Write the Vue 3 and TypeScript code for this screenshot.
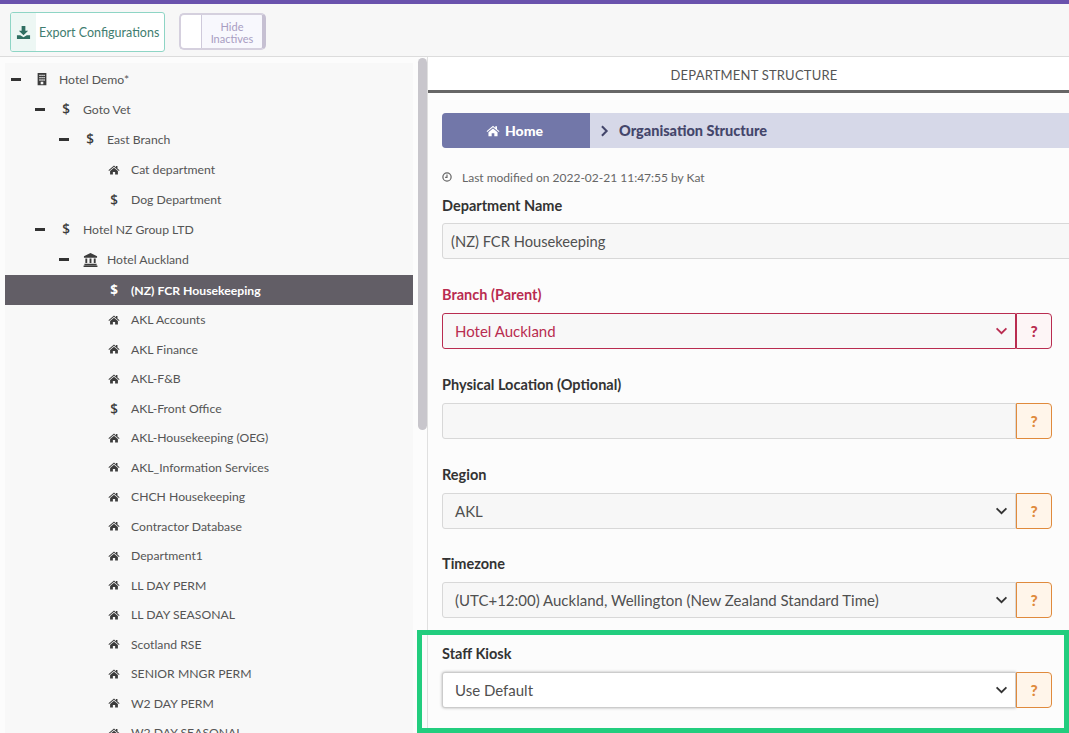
<script setup lang="ts">
type Row = { label: string; indent: number; icon: 'building' | 'dollar' | 'home' | 'bank'; open?: boolean; selected?: boolean }
const rows: Row[] = [
  { label: 'Hotel Demo*', indent: 0, icon: 'building', open: true },
  { label: 'Goto Vet', indent: 1, icon: 'dollar', open: true },
  { label: 'East Branch', indent: 2, icon: 'dollar', open: true },
  { label: 'Cat department', indent: 3, icon: 'home' },
  { label: 'Dog Department', indent: 3, icon: 'dollar' },
  { label: 'Hotel NZ Group LTD', indent: 1, icon: 'dollar', open: true },
  { label: 'Hotel Auckland', indent: 2, icon: 'bank', open: true },
  { label: '(NZ) FCR Housekeeping', indent: 3, icon: 'dollar', selected: true },
  { label: 'AKL Accounts', indent: 3, icon: 'home' },
  { label: 'AKL Finance', indent: 3, icon: 'home' },
  { label: 'AKL-F&B', indent: 3, icon: 'home' },
  { label: 'AKL-Front Office', indent: 3, icon: 'dollar' },
  { label: 'AKL-Housekeeping (OEG)', indent: 3, icon: 'home' },
  { label: 'AKL_Information Services', indent: 3, icon: 'home' },
  { label: 'CHCH Housekeeping', indent: 3, icon: 'home' },
  { label: 'Contractor Database', indent: 3, icon: 'home' },
  { label: 'Department1', indent: 3, icon: 'home' },
  { label: 'LL DAY PERM', indent: 3, icon: 'home' },
  { label: 'LL DAY SEASONAL', indent: 3, icon: 'home' },
  { label: 'Scotland RSE', indent: 3, icon: 'home' },
  { label: 'SENIOR MNGR PERM', indent: 3, icon: 'home' },
  { label: 'W2 DAY PERM', indent: 3, icon: 'home' },
  { label: 'W2 DAY SEASONAL', indent: 3, icon: 'home' },
]
type Field = { label: string; value: string; tone?: 'danger' | 'active'; chevron: boolean }
const fields: Field[] = [
  { label: 'Branch (Parent)', value: 'Hotel Auckland', tone: 'danger', chevron: true },
  { label: 'Physical Location (Optional)', value: '', chevron: false },
  { label: 'Region', value: 'AKL', chevron: true },
  { label: 'Timezone', value: '(UTC+12:00) Auckland, Wellington (New Zealand Standard Time)', chevron: true },
  { label: 'Staff Kiosk', value: 'Use Default', tone: 'active', chevron: true },
]
</script>

<template>
  <div class="page">
    <div class="topline"></div>
    <header class="toolbar">
      <button class="export">
        <span class="export-icon">
          <svg viewBox="0 0 16 16" width="15" height="15"><path fill="currentColor" d="M6 1h4v5h3L8 11 3 6h3zM1 11h3.500L8 13l3.500-2H15v4H1z" /></svg>
        </span>
        <span class="export-text">Export Configurations</span>
      </button>
      <div class="toggle">
        <span class="toggle-knob"></span>
        <span class="toggle-label">Hide<br />Inactives</span>
      </div>
    </header>
    <div class="main">
      <aside class="side">
        <div class="tree">
          <div v-for="r in rows" :key="r.label" class="row" :class="['lvl' + r.indent, { selected: r.selected, open: r.open }]">
            <span class="dash"><i v-if="r.open"></i></span>
            <span class="node-icon">
              <span v-if="r.icon === 'dollar'" class="dollar">$</span>
              <svg v-else-if="r.icon === 'home'" viewBox="0 0 16 16" width="12" height="12"><path fill="currentColor" d="M8 2 0.6 8.200l.8 1L8 3.800l6.600 5.400.8-1L12.600 5.900V2.500h-2v1.700zM8 5 2.800 9.300V14h3.700v-3.500h3V14h3.700V9.300z" /></svg>
              <svg v-else-if="r.icon === 'building'" viewBox="0 0 16 16" width="14" height="14"><path fill="currentColor" fill-rule="evenodd" d="M3 1h10v14H3zM5 3v1.500h1.500V3zM7.300 3v1.500h1.500V3zM9.600 3v1.500h1.500V3zM5 5.700v1.500h1.500V5.700zM7.300 5.700v1.500h1.500V5.700zM9.600 5.700v1.500h1.500V5.700zM5 8.400v1.500h1.500V8.400zM7.300 8.400v1.500h1.500V8.400zM9.600 8.400v1.500h1.500V8.400zM6.500 11.200V14h3v-2.800z" /></svg>
              <svg v-else viewBox="0 0 16 16" width="15" height="15"><path fill="currentColor" d="M8 1 1 4.500V6h14V4.500zM2.500 6.800h2v5h-2zM7 6.800h2v5H7zM11.500 6.800h2v5h-2zM1.500 12.500h13V14h-13zM.6 14.500h14.800V16H.6z" /></svg>
            </span>
            <span class="node-label">{{ r.label }}</span>
          </div>
        </div>
        <div class="scrollbar"></div>
      </aside>
      <section class="panel">
        <h2 class="panel-title">DEPARTMENT STRUCTURE</h2>
        <div class="panel-body">
          <nav class="crumbs">
            <span class="crumb-home">
              <svg viewBox="0 0 16 16" width="14" height="14"><path fill="currentColor" d="M8 2 0.6 8.200l.8 1L8 3.800l6.600 5.400.8-1L12.600 5.900V2.500h-2v1.700zM8 5 2.800 9.300V14h3.700v-3.500h3V14h3.700V9.300z" /></svg>
              Home
            </span>
            <span class="crumb-rest">
              <svg viewBox="0 0 10 14" width="9" height="12"><path fill="none" stroke="currentColor" stroke-width="2.400" d="M2 1.500 7.500 7 2 12.500" /></svg>
              Organisation Structure
            </span>
          </nav>
          <p class="modified">
            <svg viewBox="0 0 16 16" width="10" height="10"><circle cx="8" cy="8" r="6.600" fill="none" stroke="currentColor" stroke-width="2" /><path fill="none" stroke="currentColor" stroke-width="1.800" d="M8 4v4.500H5" /></svg>
            <span>Last modified on 2022-02-21 11:47:55 by Kat</span>
          </p>
          <div class="field first">
            <label class="label">Department Name</label>
            <div class="input wide">(NZ) FCR Housekeeping</div>
          </div>
          <div v-for="f in fields" :key="f.label" class="field" :class="f.tone">
            <label class="label">{{ f.label }}</label>
            <div class="group">
              <div class="input">
                <span class="value">{{ f.value }}</span>
                <svg v-if="f.chevron" class="chev" viewBox="0 0 14 9" width="13" height="8"><path fill="none" stroke="currentColor" stroke-width="2" d="M1.500 1.500 7 7l5.500-5.500" /></svg>
              </div>
              <button class="help">?</button>
            </div>
          </div>
        </div>
      </section>
    </div>
    <div class="highlight"></div>
  </div>
</template>

<style>
html, body { margin: 0; overflow: hidden; }
</style>

<style scoped>
.page { position: relative; width: 1069px; height: 733px; overflow: hidden; background: #fcfcfc; font-family: Lato, "Open Sans", sans-serif; color: #4a4a4a; }
.topline { height: 4px; background: #6a52ad; }
.toolbar { height: 53px; box-sizing: border-box; display: flex; align-items: flex-start; padding: 8px 10px 0; gap: 14px; background: #f7f7f7; border-bottom: 1px solid #dcdcdc; }
.export { width: 155px; height: 40px; margin: 0; padding: 0; display: flex; align-items: stretch; background: #fff; border: 1px solid #8ed5c5; border-radius: 3px; color: #3f7d70; font: inherit; font-size: 12.500px; overflow: hidden; }
.export-icon { width: 25px; background: #edf7f4; display: flex; align-items: center; justify-content: center; color: #2f6f62; }
.export-text { flex: 1; align-self: center; text-align: left; padding-left: 3px; white-space: nowrap; }
.toggle { width: 87px; height: 37px; margin-top: 1px; box-sizing: border-box; display: flex; border: 2px solid #d5d0de; border-right-width: 4px; border-right-color: #c6c0d2; border-radius: 5px; background: #fff; overflow: hidden; }
.toggle-knob { width: 20px; border-right: 1px solid #cfcadb; }
.toggle-label { flex: 1; background: #f8f8fd; color: #a89dc2; font-size: 11px; line-height: 11.500px; text-align: center; padding-top: 6px; }
.main { display: flex; height: 676px; }
.side { width: 427px; flex: none; display: flex; align-items: flex-start; padding: 6px 0 0 5px; box-sizing: border-box; position: relative; }
.tree { width: 408px; background: #f8f8f8; flex: none; padding-top: 1px; }
.row { height: 29.500px; display: flex; align-items: center; font-size: 12.200px; color: #555; white-space: nowrap; }
.row.open { height: 30px; }
.row.lvl2.open { margin-bottom: 1px; }
.row.lvl0 { padding-left: 6px; }
.row.lvl1 { padding-left: 30px; }
.row.lvl2 { padding-left: 54px; }
.row.lvl3 { padding-left: 78px; }
.row.selected { height: 30px; background: #625e66; color: #fff; font-weight: 700; }
.dash { width: 10px; height: 3px; flex: none; }
.dash i { display: block; width: 10px; height: 3px; background: #333; }
.node-icon { width: 20px; margin-left: 11px; flex: none; display: flex; align-items: center; justify-content: center; color: #3c3c3c; }
.selected .node-icon { color: #fff; }
.dollar { font-family: "Open Sans", sans-serif; font-size: 13.500px; line-height: 1; font-weight: 600; padding-top: 2px; color: #3c3c3c; }
.selected .dollar { font-weight: 700; color: #fff; }
.node-label { margin-left: 7px; }
.scrollbar { position: absolute; top: 1px; left: 418px; width: 9px; height: 372px; background: #c8c6cc; border-radius: 5px; }
.panel { flex: 1; min-width: 0; border-left: 1px solid #e0e0e0; }
.panel-title { margin: 0; height: 33px; padding-left: 11px; box-sizing: border-box; background: #fff; font-weight: 400; font-size: 13px; line-height: 36px; text-align: center; color: #555; letter-spacing: .2px; }
.panel-body { border-top: 3px solid #666; padding: 20px 0 0 14px; width: 660px; box-sizing: border-box; }
.crumbs { display: flex; height: 35px; width: 660px; background: #d6d8e8; border-radius: 4px 0 0 4px; overflow: hidden; font-weight: 900; align-items: stretch; }
.crumb-home { width: 148px; background: #7277a9; color: #fff; font-size: 14px; display: flex; align-items: center; justify-content: center; gap: 5px; padding-right: 3px; box-sizing: border-box; }
.crumb-rest { display: flex; align-items: center; gap: 10px; padding-left: 10px; color: #44466b; font-size: 14.500px; }
.modified { margin: 21px 0 0; height: 16px; display: flex; align-items: center; gap: 10px; font-size: 12px; color: #666; }
.field { height: 89.750px; }
.field.first { margin-top: 11px; height: 89px; }
.label { display: block; height: 28px; font-size: 14.500px; font-weight: 700; color: #333; line-height: 20px; }
.field.first .label { height: 27px; }
.group { display: flex; width: 610px; }
.input { box-sizing: border-box; height: 36px; flex: 1; display: flex; align-items: center; justify-content: space-between; padding: 0 12px; background: #f7f7f7; border: 1px solid #d8d8d8; border-radius: 3px 0 0 3px; font-size: 15px; color: #505050; }
.input.wide { width: 660px; padding-left: 8px; font-size: 14.700px; }
.value { white-space: nowrap; }
.chev { color: #333; margin-right: -5px; }
.help { width: 36px; height: 36px; padding: 0; box-sizing: border-box; background: #fff5ea; border: 1px solid #e08a3c; border-radius: 0 4px 4px 0; color: #e08a3c; font: inherit; font-weight: 900; font-size: 15.500px; }
.danger .label { color: #b92c50; }
.danger .input { border-color: #b92c50; color: #b92c50; background: #f8f8f8; }
.danger .chev { color: #b92c50; }
.danger .help { background: #fdf5f6; border-color: #b92c50; color: #b92c50; }
.active .input { background: #fff; border-color: #ccc; box-shadow: 0 0 3px rgba(0, 0, 0, .3); }
.highlight { position: absolute; left: 417px; top: 630px; width: 652px; height: 103px; box-sizing: border-box; border: 5px solid #22cd7e; pointer-events: none; }
</style>
